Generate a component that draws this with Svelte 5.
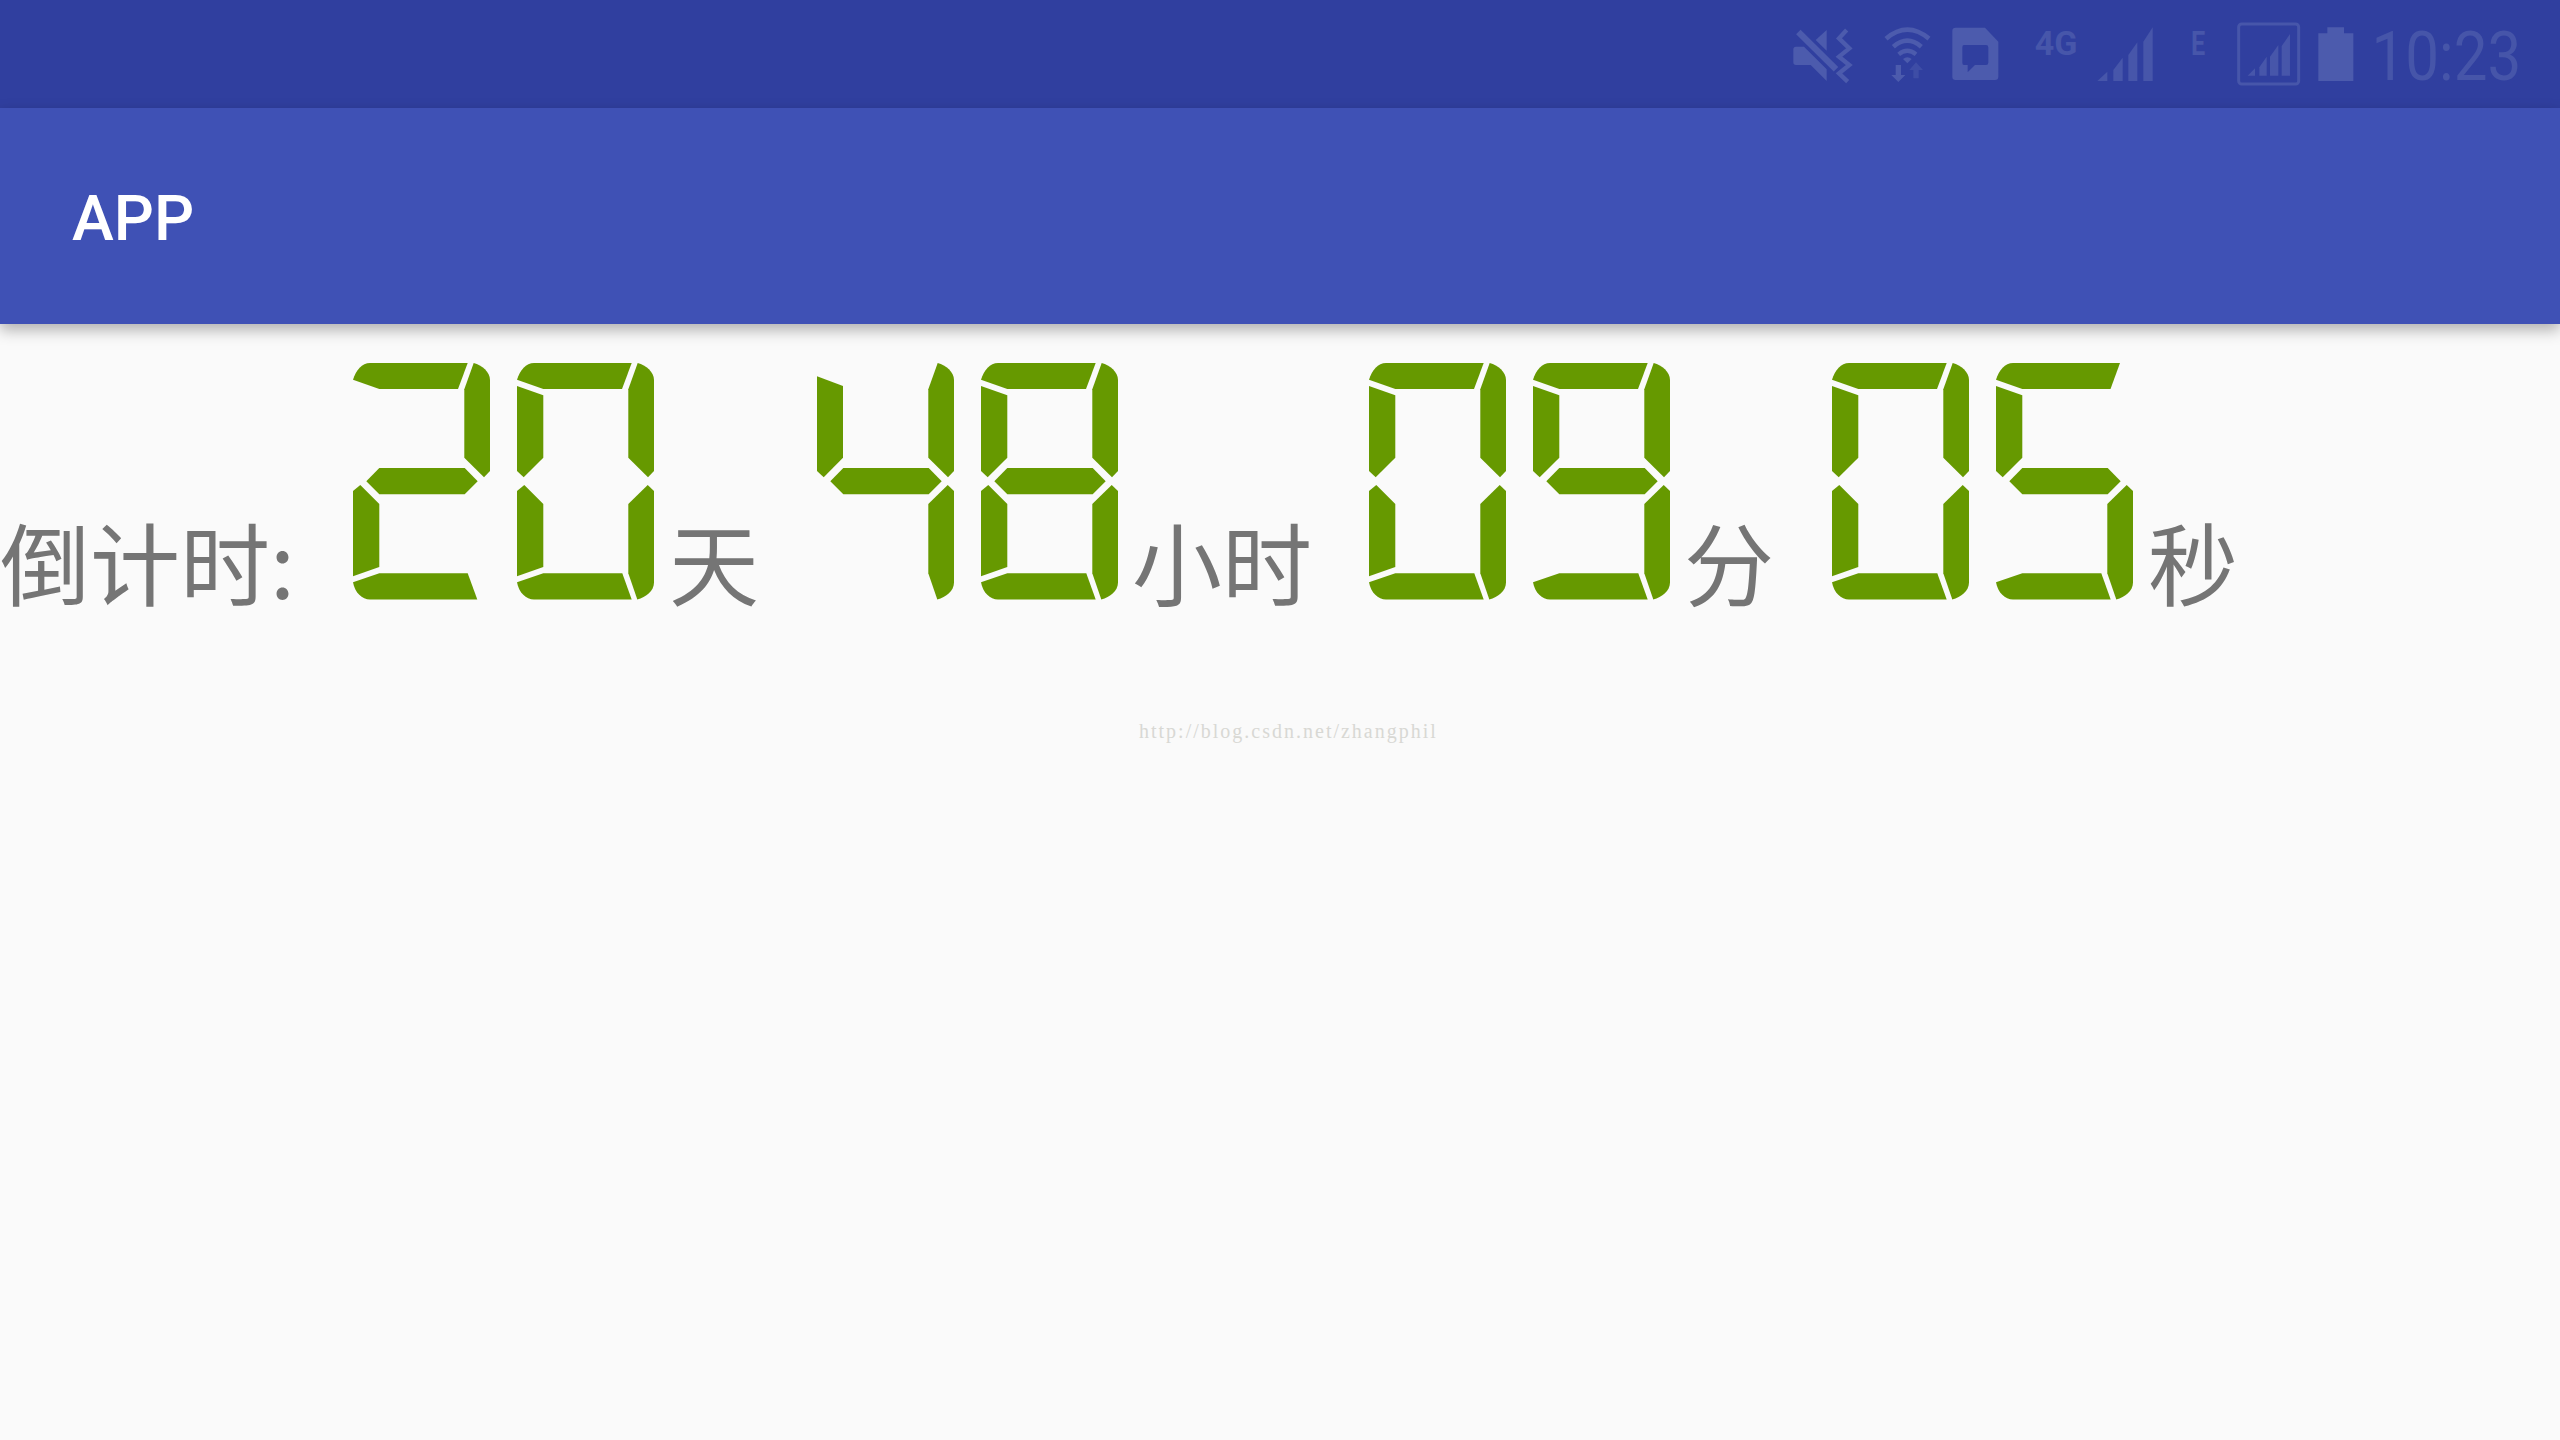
<script>
  const W = 137;
  const H = 236.5;

  const seg = {
    top: (tr) => `M0 16.7C3 7 9 0 17 0H${tr ? 114.7 : 124}L${tr ? 105 : 114.5} 26H26.3Z`,
    tl: (t) => (t ? 'M0 23L26.3 32.3V94.7L6.7 114.3L0 108Z' : 'M0 13.3L26 23V94.7L6.7 114.3L0 108Z'),
    tr: 'M120.7 0C129 2 137 9 137 17V108L131 114.3L111.3 94.7V26.3Z',
    mid: 'M13.3 118.3L26.3 105H111.7L124.7 118.3L111.7 131.3H26.3Z',
    bl: 'M7.3 122L26.3 141V204L0 213.3V128Z',
    br: 'M130.7 122L137 128V219.5C137 228 129 234 120.3 236.5L111.3 210.3V141Z',
    bot: (br) => `M0 219.3L26.3 210.3H${br ? 105.3 : 114.7}L${br ? 114.7 : 124.3} ${H}H17C9 ${H} 2 230 0 219.3Z`
  };

  const MAP = {
    0: ['t', 'tl', 'tr', 'bl', 'br', 'b'],
    2: ['t', 'tr', 'm', 'bl', 'b'],
    4: ['tl', 'tr', 'm', 'br'],
    5: ['t', 'tl', 'm', 'br', 'b'],
    8: ['t', 'tl', 'tr', 'm', 'bl', 'br', 'b'],
    9: ['t', 'tl', 'tr', 'm', 'br', 'b']
  };

  function paths(d) {
    const on = MAP[d];
    const has = (k) => on.includes(k);
    const out = [];
    if (has('t')) out.push(seg.top(has('tr')));
    if (has('tl')) out.push(seg.tl(has('t')));
    if (has('tr')) out.push(seg.tr);
    if (has('m')) out.push(seg.mid);
    if (has('bl')) out.push(seg.bl);
    if (has('br')) out.push(seg.br);
    if (has('b')) out.push(seg.bot(has('br')));
    return out;
  }
</script>

{#snippet lcd(text)}
  <div class="lcd">
    {#each text.split('') as d}
      <svg class="digit" width={W} height={H} viewBox="0 0 {W} {H}" role="img" aria-label={d}>
        {#each paths(d) as p}<path d={p} />{/each}
      </svg>
    {/each}
  </div>
{/snippet}

<div class="page">
  <div class="status">
    <svg class="ic mute" width="64" height="108" viewBox="1790 0 64 108" aria-hidden="true">
      <g transform="translate(1780 10) scale(.33333)">
        <path d="M107 90L140 60V122Z" />
        <path d="M48 110H72L140 178V213L92 165H48Q40 165 40 157V118Q40 110 48 110Z" />
        <path d="M55 66L168 178" fill="none" stroke-width="19" class="st" />
        <path d="M200 60L177 85L208 115L177 140L208 165L177 190L203 215" fill="none" stroke-width="13" class="st" />
      </g>
    </svg>
    <svg class="ic wifi" width="55" height="108" viewBox="1880 0 55 108" aria-hidden="true">
      <g transform="translate(1780 10) scale(.33333)">
        <path d="M318 86Q382 32 447 86" fill="none" stroke-width="14" class="st" />
        <path d="M340 110Q382 74 424 110" fill="none" stroke-width="14" class="st" />
        <path d="M356 133Q382 112 408 133" fill="none" stroke-width="13" class="st" />
        <path d="M369 147Q382 137 395 147L382 160Z" />
        <path d="M347 165H363V195H376L355 216L334 195H347Z" />
        <path d="M400 205V180H388L408 157L429 180H416V205Z" opacity=".5" />
      </g>
    </svg>
    <svg class="ic sim" width="50" height="108" viewBox="1950 0 50 108" aria-hidden="true">
      <g transform="translate(1780 10) scale(.33333)">
        <path fill-rule="evenodd" d="M527 53H615L655 95V200Q655 210 645 210H527Q517 210 517 200V63Q517 53 527 53ZM552 105Q547 105 547 112V158Q547 165 552 165H563V187L585 165H618Q625 165 625 158V112Q625 105 618 105Z" />
      </g>
    </svg>
    <span class="net four">4G</span>
    <svg class="ic sig" width="60" height="108" viewBox="2095 0 60 108" aria-hidden="true">
      <g transform="translate(2100 10) scale(.33333)" class="dim">
        <path d="M158 52V213H130V95Z" />
        <path d="M112 97V213H85V135Z" />
        <path d="M68 143V213H40V180Z" />
        <path d="M22 185V213H-8Z" />
      </g>
    </svg>
    <span class="net edge">E</span>
    <svg class="ic box" width="71" height="108" viewBox="2233 0 71 108" aria-hidden="true">
      <g transform="translate(2100 10) scale(.33333)" class="dim">
        <rect x="416" y="42" width="180" height="180" rx="9" fill="none" stroke-width="9" class="st" />
        <path d="M570 72V197H545V108Z" />
        <path d="M535 105V197H510V140Z" />
        <path d="M500 140V197H478V172Z" />
        <path d="M465 175V197H443Z" />
      </g>
    </svg>
    <svg class="ic batt" width="40" height="108" viewBox="2316 0 40 108" aria-hidden="true">
      <g transform="translate(2100 10) scale(.33333)">
        <path d="M682 52H732V70H760V213H655V70H682Z" />
      </g>
    </svg>
    <span class="clock">10:23</span>
  </div>

  <header class="bar"><span class="title">APP</span></header>

  <main class="row">
    <span class="lb lb-head">倒计时:</span>
    <div class="g g1">{@render lcd('20')}</div>
    <span class="lb u">天</span>
    <div class="g">{@render lcd('48')}</div>
    <span class="lb u u2">小时</span>
    <div class="g g3">{@render lcd('09')}</div>
    <span class="lb u u2">分</span>
    <div class="g">{@render lcd('05')}</div>
    <span class="lb u">秒</span>
  </main>

  <div class="mark">http://blog.csdn.net/zhangphil</div>
</div>

<style>
  :global(body) {
    margin: 0;
    background: #fafafa;
  }
  .page {
    position: relative;
    width: 2560px;
    height: 1440px;
    overflow: hidden;
    background: #fafafa;
    font-family: Roboto, "Noto Sans CJK SC", sans-serif;
  }
  .status {
    height: 108px;
    background: #303f9f;
    display: flex;
    justify-content: flex-end;
    align-items: flex-start;
    padding-right: 39px;
    box-sizing: border-box;
  }
  .ic {
    display: block;
    flex: none;
    fill: #4c5bad;
  }
  .ic .st {
    stroke: #4c5bad;
    fill: none;
  }
  .ic .dim {
    fill: #4756aa;
  }
  .ic .dim .st {
    stroke: #4756aa;
    fill: none;
  }
  .wifi { margin-left: 26px; }
  .sim { margin-left: 15px; }
  .net {
    flex: none;
    color: #4756aa;
    font-weight: 700;
    font-size: 34px;
    line-height: 34px;
    margin-top: 26px;
  }
  .four {
    width: 42px;
    margin-left: 35px;
  }
  .sig { margin-left: 18px; }
  .edge {
    width: 13px;
    margin-left: 36px;
    transform: scaleX(.74);
    transform-origin: left center;
  }
  .box { margin-left: 29px; }
  .batt { margin-left: 12px; }
  .clock {
    flex: none;
    margin-left: -4px;
    margin-top: 17px;
    font-size: 68px;
    line-height: 81px;
    font-weight: 400;
    color: #4655a9;
    transform: scaleX(.885);
    transform-origin: right center;
  }
  .bar {
    position: relative;
    height: 216px;
    box-sizing: border-box;
    padding: 4px 0 0 72px;
    background: #3f51b5;
    display: flex;
    align-items: center;
    box-shadow: 0 6px 14px rgba(0, 0, 0, .3);
  }
  .title {
    color: #fff;
    font-size: 63px;
    font-weight: 500;
  }
  .row {
    display: flex;
    align-items: baseline;
    padding-top: 39px;
  }
  .lcd {
    display: flex;
    gap: 27px;
  }
  .digit {
    display: block;
    flex: none;
    fill: #669900;
  }
  .g {
    margin-left: 58px;
    flex: none;
  }
  .g3 {
    margin-left: 57px;
  }
  .lb {
    flex: none;
    font-family: "Noto Sans CJK SC", sans-serif;
    font-size: 90px;
    line-height: 100px;
    color: #757575;
    white-space: nowrap;
    position: relative;
    top: -1px;
  }
  .u {
    margin-left: 15px;
  }
  .u2 {
    margin-left: 14px;
  }
  .mark {
    position: absolute;
    left: 1139px;
    top: 719px;
    font-family: "Liberation Serif", serif;
    font-size: 20px;
    letter-spacing: 2px;
    line-height: 24px;
    color: #d8d8d4;
    white-space: nowrap;
  }
</style>
